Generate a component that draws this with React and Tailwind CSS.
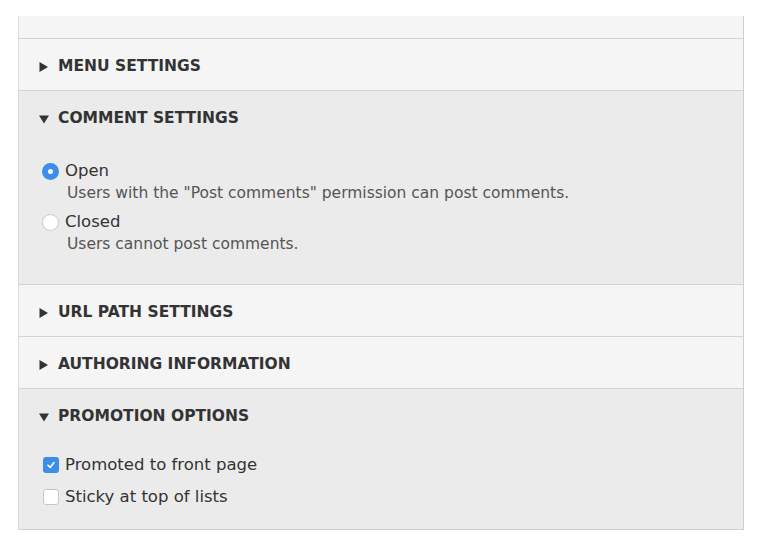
import { useState } from "react";

const font = { fontFamily: '"DejaVu Sans", "Liberation Sans", sans-serif' };

const Arrow = ({ open }) =>
  open ? (
    <svg width="10" height="9" viewBox="0 0 10 9" className="shrink-0">
      <path d="M0 0.5 H10 L5 8.5 Z" fill="#333" />
    </svg>
  ) : (
    <svg width="9" height="10" viewBox="0 0 9 10" className="shrink-0">
      <path d="M0.5 0 V10 L9 5 Z" fill="#333" />
    </svg>
  );

const Section = ({ title, open, children }) => (
  <div className={`border-t border-[#d4d4d4] ${open ? "bg-[#ebebeb]" : "bg-[#f5f5f5]"}`}>
    <div className="flex h-[51px] items-center pl-[20px] pt-[5px] text-[#333]">
      <span className="flex w-[19px] items-center">
        <Arrow open={open} />
      </span>
      <span className="text-[15.5px] font-bold uppercase">{title}</span>
    </div>
    {children}
  </div>
);

const Radio = ({ checked }) =>
  checked ? (
    <span className="flex h-[17px] w-[17px] shrink-0 items-center justify-center rounded-full bg-[#3b8eea]">
      <span className="h-[5px] w-[5px] rounded-full bg-white" />
    </span>
  ) : (
    <span className="h-[17px] w-[17px] shrink-0 rounded-full border border-[#c8c8c8] bg-white" />
  );

const Checkbox = ({ checked }) =>
  checked ? (
    <span className="flex h-[16px] w-[16px] shrink-0 items-center justify-center rounded-[3px] bg-[#3b8eea]">
      <svg width="10" height="10" viewBox="0 0 10 10" fill="none">
        <path d="M2 5.2 L4.2 7.4 L8 2.6" stroke="white" strokeWidth="1.6" strokeLinecap="round" strokeLinejoin="round" />
      </svg>
    </span>
  ) : (
    <span className="h-[16px] w-[16px] shrink-0 rounded-[3px] border border-[#c8c8c8] bg-white" />
  );

export default function App() {
  const [comments] = useState("open");

  return (
    <div className="h-[560px] w-[768px] bg-white pt-[16px]" style={font}>
      <div className="ml-[18px] w-[726px] border-b border-l border-r border-b-[#cfcfcf] border-l-[#dcdcdc] border-r-[#cfcfcf]">
        <div className="h-[22px] bg-[#f5f5f5]" />

        <Section title="Menu settings" />

        <Section title="Comment settings" open>
          <div className="flex flex-col pb-[30px] pl-[23px] pt-[17px] text-[#333]">
            <label className="flex items-center gap-[6px] text-[16.5px] leading-[24px]">
              <Radio checked={comments === "open"} />
              Open
            </label>
            <p className="pl-[25px] text-[15.5px] leading-[20px] text-[#555]">
              Users with the "Post comments" permission can post comments.
            </p>
            <label className="mt-[7px] flex items-center gap-[6px] text-[16.5px] leading-[24px]">
              <Radio checked={comments === "closed"} />
              Closed
            </label>
            <p className="pl-[25px] text-[15.5px] leading-[20px] text-[#555]">
              Users cannot post comments.
            </p>
          </div>
        </Section>

        <Section title="URL path settings" />

        <Section title="Authoring information" />

        <Section title="Promotion options" open>
          <div className="flex flex-col gap-[8px] pb-[20px] pl-[24px] pt-[13px] text-[#333]">
            <label className="flex items-center gap-[6px] text-[16.5px] leading-[24px]">
              <Checkbox checked />
              Promoted to front page
            </label>
            <label className="flex items-center gap-[6px] text-[16.5px] leading-[24px]">
              <Checkbox />
              Sticky at top of lists
            </label>
          </div>
        </Section>
      </div>
    </div>
  );
}
